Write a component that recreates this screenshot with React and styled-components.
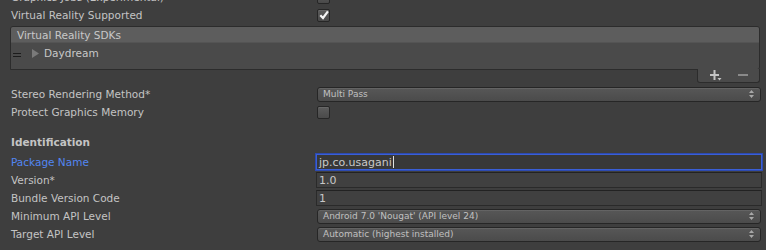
import styled, { createGlobalStyle } from 'styled-components';

const GlobalStyle = createGlobalStyle`
  html, body {
    margin: 0;
    background: #3e3e3e;
    overflow: hidden;
  }
  body {
    font-family: "DejaVu Sans", "Liberation Sans", sans-serif;
    font-size: 10.5px;
    color: #c4c4c4;
  }
`;

const Inspector = styled.div`
  display: flex;
  flex-direction: column;
  margin-top: -12px;
  padding: 0 4px 0 11px;
`;

const Row = styled.div`
  display: grid;
  grid-template-columns: 305px 1fr;
  align-items: center;
  height: 18px;
  margin-top: ${(p) => p.$gap || 0}px;
`;

const Label = styled.span`
  color: ${(p) => (p.$active ? '#5286f2' : '#c4c4c4')};
  white-space: nowrap;
`;

const Heading = styled.div`
  height: 18px;
  display: flex;
  align-items: center;
  margin: 12px 0 2px;
  font-weight: bold;
  color: #c4c4c4;
`;

const Checkbox = styled.div`
  width: 11px;
  height: 11px;
  margin-left: 1px;
  border: 1px solid #262626;
  border-radius: 2px;
  background: linear-gradient(#5c5c5c, #4a4a4a);
  box-shadow: inset 0 1px 0 rgba(255, 255, 255, 0.08);
  display: flex;
  align-items: center;
  justify-content: center;
`;

const Popup = styled.div`
  height: 13px;
  margin: 0 1px;
  padding: 0 6px 0 5px;
  border: 1px solid #262626;
  border-radius: 3px;
  background: linear-gradient(#575757, #4b4b4b);
  box-shadow: inset 0 1px 0 rgba(255, 255, 255, 0.08);
  display: flex;
  align-items: center;
  justify-content: space-between;
  font-size: 9px;
  color: #c0c0c0;
`;

const TextField = styled.div`
  height: 14px;
  padding: 0 2px;
  border: 1px solid ${(p) => (p.$focused ? '#3a5fd6' : '#2a2a2a')};
  border-top-color: ${(p) => (p.$focused ? '#3a5fd6' : '#222')};
  background: ${(p) => (p.$focused ? '#383838' : '#404040')};
  box-shadow: ${(p) => (p.$focused ? '0 0 0 1px #2d4ab0' : 'none')};
  display: flex;
  align-items: center;
  font-size: 11px;
  color: #c8c8c8;
`;

const Caret = styled.span`
  width: 1px;
  height: 12px;
  margin-left: 1px;
  background: #e0e0e0;
`;

const List = styled.div`
  display: flex;
  flex-direction: column;
  margin: 2px 2px 0 -1px;
`;

const ListBox = styled.div`
  border: 1px solid #2c2c2c;
  border-radius: 3px 3px 3px 0;
  overflow: hidden;
`;

const ListHeader = styled.div`
  height: 15px;
  padding-left: 6px;
  background: #5d5d5d;
  border-bottom: 1px solid #545454;
  display: flex;
  align-items: center;
  color: #c8c8c8;
`;

const ListBody = styled.div`
  height: 26px;
  padding: 4px 0 0 2px;
  box-sizing: border-box;
  background: #4a4a4a;
  display: flex;
  align-items: flex-start;
  gap: 5px;
`;

const Handle = styled.span`
  width: 8px;
  height: 2px;
  margin-top: 6px;
  border-top: 1px solid #1c1c1c;
  border-bottom: 1px solid #1c1c1c;
`;

const Foldout = styled.span`
  display: flex;
  align-items: center;
  gap: 5px;
  margin-left: 6px;
  color: #c8c8c8;
`;

const Footer = styled.div`
  align-self: flex-end;
  width: 53px;
  height: 13px;
  margin-top: -1px;
  border: 1px solid #2c2c2c;
  border-top: none;
  border-radius: 0 0 3px 3px;
  background: #4a4a4a;
  display: flex;
  align-items: center;
  justify-content: space-around;
  padding: 0 4px;
`;

const Arrows = () => (
  <svg width="5" height="8" viewBox="0 0 5 8">
    <path d="M2.5 0 L5 3 H0 Z M0 5 H5 L2.5 8 Z" fill="#a8a8a8" />
  </svg>
);

const Check = () => (
  <svg width="10" height="10" viewBox="0 0 10 10">
    <path d="M1.3 5.2 L4 8 L8.9 1.3" stroke="#f6f6f6" strokeWidth="2.2" fill="none" />
  </svg>
);

function PopupField({ value }) {
  return (
    <Popup>
      <span>{value}</span>
      <Arrows />
    </Popup>
  );
}

function CheckRow({ label, checked }) {
  return (
    <Row>
      <Label>{label}</Label>
      <Checkbox>{checked && <Check />}</Checkbox>
    </Row>
  );
}

function App() {
  return (
    <>
      <GlobalStyle />
      <Inspector>
        <CheckRow label="Graphics Jobs (Experimental)" />
        <CheckRow label="Virtual Reality Supported" checked />
        <List>
          <ListBox>
            <ListHeader>Virtual Reality SDKs</ListHeader>
            <ListBody>
              <Handle />
              <Foldout>
                <svg width="7" height="9" viewBox="0 0 7 9">
                  <path d="M0 0 L7 4.5 L0 9 Z" fill="#7a7a7a" />
                </svg>
                Daydream
              </Foldout>
            </ListBody>
          </ListBox>
          <Footer>
            <svg width="13" height="11" viewBox="0 0 13 11">
              <path d="M0 4 H9 V6 H0 Z M3.5 0 H5.5 V10 H3.5 Z" fill="#c4c4c4" />
              <path d="M7.5 8 H11.5 L9.5 10.5 Z" fill="#c4c4c4" />
            </svg>
            <svg width="10" height="3" viewBox="0 0 10 3">
              <rect x="0" y="0" width="10" height="2" fill="#8a8a8a" />
            </svg>
          </Footer>
        </List>
        <Row $gap={2}>
          <Label>Stereo Rendering Method*</Label>
          <PopupField value="Multi Pass" />
        </Row>
        <CheckRow label="Protect Graphics Memory" />
        <Heading>Identification</Heading>
        <Row>
          <Label $active>Package Name</Label>
          <TextField $focused>
            jp.co.usagani
            <Caret />
          </TextField>
        </Row>
        <Row>
          <Label>Version*</Label>
          <TextField>1.0</TextField>
        </Row>
        <Row>
          <Label>Bundle Version Code</Label>
          <TextField>1</TextField>
        </Row>
        <Row>
          <Label>Minimum API Level</Label>
          <PopupField value="Android 7.0 'Nougat' (API level 24)" />
        </Row>
        <Row>
          <Label>Target API Level</Label>
          <PopupField value="Automatic (highest installed)" />
        </Row>
      </Inspector>
    </>
  );
}

export default App;
